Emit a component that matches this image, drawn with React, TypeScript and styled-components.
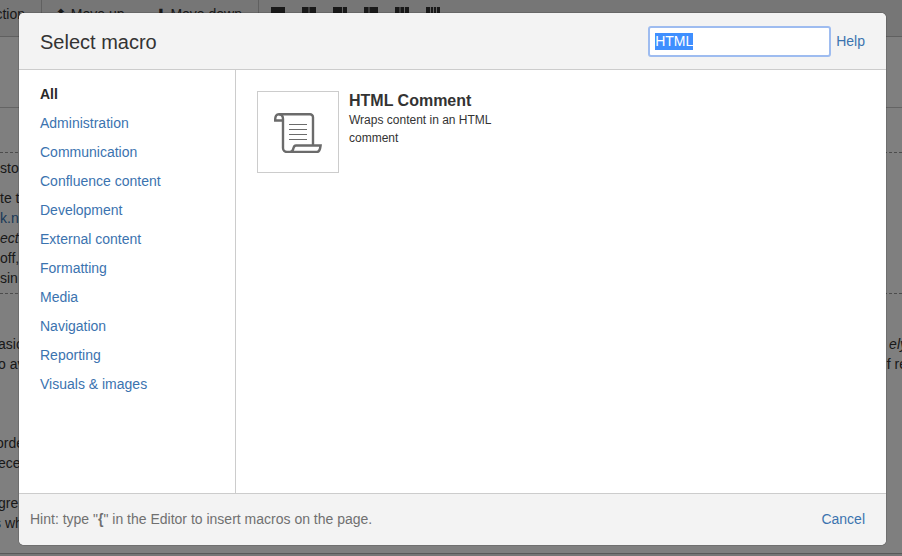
import React from 'react';
import styled, { createGlobalStyle } from 'styled-components';

const GlobalStyle = createGlobalStyle`
  html, body {
    margin: 0;
    height: 100%;
    overflow: hidden;
    background: #fff;
    font-family: "Liberation Sans", Arial, sans-serif;
    font-size: 14px;
    color: #333;
  }
`;

const categories = [
  'Administration',
  'Communication',
  'Confluence content',
  'Development',
  'External content',
  'Formatting',
  'Media',
  'Navigation',
  'Reporting',
  'Visuals & images',
];

// column splits of the layout buttons in the page toolbar behind the dialog
const layouts = [[14], [6.5], [9], [4.5], [4.5, 9], [4, 7, 10]];

const Page = styled.div`
  width: 902px;
  height: 556px;
  overflow: hidden;
  display: flex;
  flex-direction: column;
`;

const Toolbar = styled.div`
  height: 37px;
  flex: none;
  box-sizing: border-box;
  display: flex;
  background: #ececec;
  border-bottom: 1px solid #c0c0c0;
`;

const ToolbarGroup = styled.div<{ $width: number }>`
  width: ${p => p.$width}px;
  height: 100%;
  flex: none;
  display: flex;
  align-items: center;
  justify-content: flex-end;
  gap: 30px;
  box-sizing: border-box;
  padding: 0 16px 8px 0;
  border-right: 1px solid #c0c0c0;
  color: #333;
`;

const LayoutButtons = styled.div`
  display: flex;
  gap: 17px;
  padding: 7px 0 0 12px;
`;

const Sub = styled.div`
  height: 71px;
  flex: none;
  box-sizing: border-box;
  border-bottom: 1px solid #c8c8c8;
`;

const Dashed = styled.div<{ $top: number }>`
  margin-top: ${p => p.$top}px;
  border-top: 1px dashed #999;
`;

const TextLine = styled.div<{ $top?: number; $italic?: boolean; $link?: boolean; $shift?: number }>`
  height: 20px;
  line-height: 20px;
  flex: none;
  margin-top: ${p => p.$top ?? 0}px;
  margin-left: ${p => -(p.$shift ?? 0)}px;
  display: flex;
  justify-content: space-between;
  white-space: nowrap;
  font-style: ${p => (p.$italic ? 'italic' : 'normal')};
  color: ${p => (p.$link ? '#3572b0' : '#333')};
`;

const LineEnd = styled.span<{ $italic?: boolean }>`
  margin-right: -5px;
  font-style: ${p => (p.$italic ? 'italic' : 'normal')};
`;

const BottomBar = styled.div`
  margin-top: auto;
  height: 2px;
  flex: none;
  background: #ececec;
  border-top: 1px solid #b0b0b0;
`;

const Overlay = styled.div`
  position: absolute;
  inset: 0;
  background: rgba(0, 0, 0, 0.5);
`;

const Dialog = styled.div`
  position: absolute;
  left: 19px;
  top: 13px;
  width: 867px;
  height: 532px;
  box-sizing: border-box;
  display: flex;
  flex-direction: column;
  background: #fff;
  border-radius: 5px;
  overflow: hidden;
  box-shadow: 0 0 0 1px rgba(0, 0, 0, 0.12);
`;

const Header = styled.header`
  height: 57px;
  flex: none;
  box-sizing: border-box;
  display: flex;
  align-items: center;
  justify-content: space-between;
  padding: 0 21px 0 21px;
  background: #f3f3f3;
  border-bottom: 1px solid #ccc;
`;

const Title = styled.h2`
  margin: 3px 0 0;
  font-size: 20px;
  font-weight: 400;
  color: #333;
`;

const HeaderRight = styled.div`
  display: flex;
  align-items: center;
  gap: 5px;
`;

const SearchBox = styled.div`
  width: 183px;
  height: 31px;
  box-sizing: border-box;
  display: flex;
  align-items: center;
  padding: 0 5px;
  background: #fff;
  border: 2px solid #9ebcf0;
  border-radius: 3px;
`;

const Selected = styled.span`
  background: #3f8fff;
  color: #fff;
  font-size: 14px;
  line-height: 17px;
`;

const LinkText = styled.a`
  color: #3b73af;
  font-size: 14px;
`;

const Body = styled.div`
  flex: 1;
  min-height: 0;
  display: flex;
`;

const Sidebar = styled.nav`
  width: 217px;
  flex: none;
  box-sizing: border-box;
  padding: 10px 0 0 21px;
  border-right: 1px solid #ccc;
  display: flex;
  flex-direction: column;
`;

const NavItem = styled.a<{ $active?: boolean }>`
  height: 29px;
  line-height: 29px;
  font-size: 14px;
  color: ${p => (p.$active ? '#292929' : '#3b73af')};
  font-weight: ${p => (p.$active ? 700 : 400)};
`;

const Content = styled.main`
  flex: 1;
  padding: 21px;
`;

const MacroCard = styled.div`
  display: flex;
  gap: 10px;
`;

const IconBox = styled.div`
  width: 82px;
  height: 82px;
  flex: none;
  box-sizing: border-box;
  display: flex;
  align-items: center;
  justify-content: center;
  border: 1px solid #ccc;
`;

const MacroText = styled.div`
  width: 160px;
`;

const MacroName = styled.div`
  font-size: 16px;
  font-weight: 700;
  line-height: 19px;
  color: #333;
`;

const MacroDesc = styled.div`
  margin-top: 1px;
  font-size: 12px;
  line-height: 18px;
  color: #333;
`;

const Footer = styled.footer`
  height: 52px;
  flex: none;
  box-sizing: border-box;
  display: flex;
  align-items: center;
  justify-content: space-between;
  padding: 0 21px 2px 11px;
  background: #f3f3f3;
  border-top: 1px solid #ccc;
`;

const Hint = styled.div`
  font-size: 14px;
  color: #707070;
`;

const ScrollIcon = () => (
  <svg width="48" height="40" viewBox="0 0 48 40" fill="none" stroke="#6b6b6b" strokeWidth="2.4" style={{ marginTop: 1 }}>
    <path d="M9 7.500H1.200C1 3 2.500 1.200 5 1.200H36a3 3 0 0 1 3 3V32" />
    <path d="M5 1.200C8 1.200 9 3.500 9 6V35a4 4 0 0 0 4 4H43c2 0 3-1.500 3.600-6.500H22c-1 0-2 .5-2.500 2.500-.5 2.500-1.500 4-3.500 4" />
    <path d="M15 11.500H33M15 16.500H33M15 21.500H33M15 26.500H33" strokeWidth="1" />
  </svg>
);

const LayoutIcon = ({ splits }: { splits: number[] }) => (
  <svg width="14" height="10" viewBox="0 0 14 10">
    <rect width="14" height="10" fill="#333" />
    {splits.map(x => (
      <rect key={x} x={x} width="1" height="10" fill="#ccc" />
    ))}
  </svg>
);

export default function App() {
  return (
    <>
      <GlobalStyle />
      <Page>
        <Toolbar>
          <ToolbarGroup $width={42}>ction</ToolbarGroup>
          <ToolbarGroup $width={217}>
            <span>⬆ Move up</span>
            <span>⬇ Move down</span>
          </ToolbarGroup>
          <LayoutButtons>
            {layouts.map((splits, i) => (
              <LayoutIcon key={i} splits={splits} />
            ))}
          </LayoutButtons>
        </Toolbar>
        <Sub />
        <Dashed $top={44} />
        <TextLine $top={5}>sto</TextLine>
        <TextLine $top={10}>te t</TextLine>
        <TextLine $link>k.ne</TextLine>
        <TextLine $italic>ecti</TextLine>
        <TextLine>off,</TextLine>
        <TextLine>sin</TextLine>
        <Dashed $top={5} />
        <TextLine $top={40} $shift={2}>
          <span>asic</span>
          <LineEnd $italic>ely</LineEnd>
        </TextLine>
        <TextLine $shift={2}>
          <span>o av</span>
          <LineEnd>f re</LineEnd>
        </TextLine>
        <TextLine $top={59} $shift={4}>orde</TextLine>
        <TextLine $shift={2}>ece</TextLine>
        <TextLine $top={20} $shift={2}>gre</TextLine>
        <TextLine $shift={6}>s wh</TextLine>
        <BottomBar />
      </Page>
      <Overlay />
      <Dialog>
        <Header>
          <Title>Select macro</Title>
          <HeaderRight>
            <SearchBox>
              <Selected>HTML</Selected>
            </SearchBox>
            <LinkText>Help</LinkText>
          </HeaderRight>
        </Header>
        <Body>
          <Sidebar>
            <NavItem $active>All</NavItem>
            {categories.map(c => (
              <NavItem key={c}>{c}</NavItem>
            ))}
          </Sidebar>
          <Content>
            <MacroCard>
              <IconBox>
                <ScrollIcon />
              </IconBox>
              <MacroText>
                <MacroName>HTML Comment</MacroName>
                <MacroDesc>Wraps content in an HTML comment</MacroDesc>
              </MacroText>
            </MacroCard>
          </Content>
        </Body>
        <Footer>
          <Hint>
            Hint: type "<b>{'{'}</b>" in the Editor to insert macros on the page.
          </Hint>
          <LinkText>Cancel</LinkText>
        </Footer>
      </Dialog>
    </>
  );
}
